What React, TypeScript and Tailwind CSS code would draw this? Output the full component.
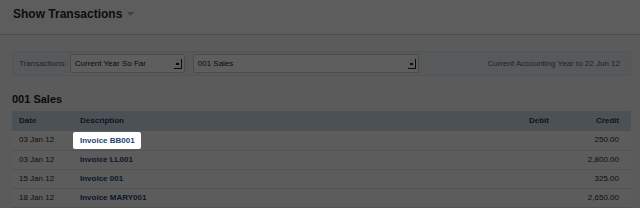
const ROWS = [
  { date: '03 Jan 12', desc: 'Invoice BB001', debit: '', credit: '250.00' },
  { date: '03 Jan 12', desc: 'Invoice LL001', debit: '', credit: '2,800.00' },
  { date: '15 Jan 12', desc: 'Invoice 001', debit: '', credit: '325.00' },
  { date: '18 Jan 12', desc: 'Invoice MARY001', debit: '', credit: '2,650.00' },
]

const FakeSelect: React.FC<{ label: string; width: string }> = ({ label, width }) => (
  <div className={`flex items-center h-[19px] ${width} bg-[#f7f7f7] border border-[#c3c8cc] rounded-[2px] pl-[4px] pr-[2px]`}>
    <span className="flex-1 text-[8px] text-[#222]">{label}</span>
    <span className="flex items-end justify-center w-[8px] h-[10px] pb-[3px] border-r border-b border-[#222] bg-[#f2f2f2]">
      <span className="w-[3px] h-[2px] bg-[#222]" />
    </span>
  </div>
)

export default function App() {
  return (
    <div className="relative min-h-[208px] bg-[#eeeeee] font-['Liberation_Sans',Arial,sans-serif] overflow-hidden">
      {/* page header */}
      <div className="flex items-start h-[35px] px-[13px] pt-[7px] bg-[#f4f4f4] border-b border-[#d0d0d0]">
        <span className="text-[12px] leading-[14px] font-bold text-[#262626]">Show Transactions</span>
        <svg className="ml-[5px] mt-[5px]" width="7" height="4" viewBox="0 0 7 4">
          <path d="M0 0h7L3.5 4z" fill="#a8a8a8" />
        </svg>
      </div>

      <div className="pl-[12px] pr-[9px] pt-[16px]">
        {/* filter bar */}
        <div className="flex items-center h-[25px] pl-[6px] pr-[10px] gap-[3px] bg-[#e6ebef] border border-[#d8dee3] rounded-[3px]">
          <span className="text-[8px] text-[#50606e]">Transactions:</span>
          <FakeSelect label="Current Year So Far" width="w-[115px]" />
          <span className="w-[2px]" />
          <FakeSelect label="001 Sales" width="w-[226px]" />
          <span className="flex-1 text-right text-[8px] text-[#50606e]">
            Current Accounting Year to 22 Jun 12
          </span>
        </div>

        <h2 className="mt-[17px] mb-[5px] leading-[13px] text-[11px] font-bold text-[#1c1c1c]">001 Sales</h2>

        {/* table */}
        <table className="w-full border-collapse text-[8px]">
          <thead>
            <tr className="h-[20px] bg-[#c8d6e1] text-[#1f3b5c]">
              <th className="pl-[7px] w-[68px] text-left font-bold">Date</th>
              <th className="text-left font-bold">Description</th>
              <th className="w-[100px] text-right font-bold">Debit</th>
              <th className="w-[82px] pr-[12px] text-right font-bold">Credit</th>
            </tr>
          </thead>
          <tbody>
            {ROWS.map((row, i) => (
              <tr key={i} className="h-[19px] border-b border-[#d9d9d9] bg-[#f1f1f1] text-[#2d2d2d]">
                <td className="pl-[7px]">{row.date}</td>
                <td>
                  {i === 0 ? (
                    <span className="relative z-20 -ml-[7px] inline-block bg-white pl-[7px] pr-[6px] py-[4px] leading-[9px] rounded-[2px] font-bold text-[#1f3f73]">
                      {row.desc}
                    </span>
                  ) : (
                    <span className="font-bold text-[#1f3f73]">{row.desc}</span>
                  )}
                </td>
                <td className="text-right">{row.debit}</td>
                <td className="pr-[12px] text-right">{row.credit}</td>
              </tr>
            ))}
          </tbody>
        </table>
      </div>

      {/* tour overlay */}
      <div className="absolute inset-0 z-10 bg-black/[0.62]" />
    </div>
  )
}
